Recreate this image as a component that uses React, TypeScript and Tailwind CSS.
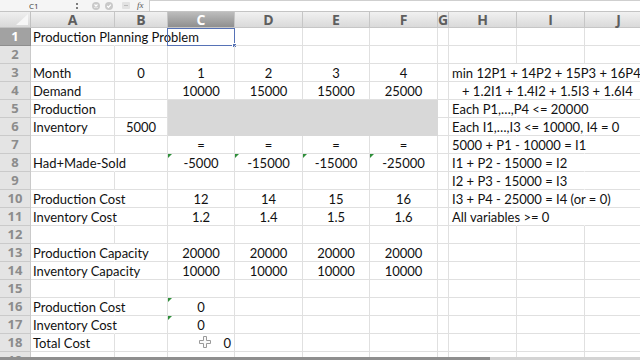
import React from "react";

type Cell = {
  t?: string;
  a?: "l" | "c" | "r";
  fill?: boolean;
  nr?: boolean;
  tri?: boolean;
  ind?: boolean;
  sel?: boolean;
  cur?: boolean;
};

const colW = [
  "w-[84px]",
  "w-[53px]",
  "w-[67px]",
  "w-[68px]",
  "w-[67px]",
  "w-[68px]",
  "w-[11px]",
  "w-[68px]",
  "w-[68px]",
  "w-[68px]",
];
const letters = ["A", "B", "C", "D", "E", "F", "G", "H", "I", "J"];

const E: Cell = {};
const c = (t: string, extra: Partial<Cell> = {}): Cell => ({ t, a: "c", ...extra });
const L = (t: string, extra: Partial<Cell> = {}): Cell => ({ t, a: "l", ...extra });
const F: Cell = { fill: true };
const H = (t: string, extra: Partial<Cell> = {}): Cell => ({ t, a: "l", nr: true, ...extra });
const NR: Cell = { nr: true };

const rows: Cell[][] = [
  [L("Production Planning Problem", { nr: true }), NR, { sel: true }, E, E, E, E, E, E, E],
  [E, E, E, E, E, E, E, E, E, E],
  [L("Month"), c("0"), c("1"), c("2"), c("3"), c("4"), E, H("min 12P1 + 14P2 + 15P3 + 16P4"), NR, E],
  [L("Demand"), E, c("10000"), c("15000"), c("15000"), c("25000"), E, H("+ 1.2I1 + 1.4I2 + 1.5I3 + 1.6I4", { ind: true }), NR, E],
  [L("Production"), E, F, F, F, F, E, H("Each P1,…,P4 <= 20000"), NR, E],
  [L("Inventory"), c("5000"), F, F, F, F, E, H("Each I1,…,I3 <= 10000, I4 = 0"), NR, E],
  [E, E, c("="), c("="), c("="), c("="), E, H("5000 + P1 - 10000 = I1"), NR, E],
  [L("Had+Made-Sold", { nr: true }), E, c("-5000", { tri: true }), c("-15000", { tri: true }), c("-15000", { tri: true }), c("-25000", { tri: true }), E, H("I1 + P2 - 15000 = I2"), NR, E],
  [E, E, E, E, E, E, E, H("I2 + P3 - 15000 = I3"), NR, E],
  [L("Production Cost", { nr: true }), E, c("12"), c("14"), c("15"), c("16"), E, H("I3 + P4 - 25000 = I4 (or = 0)"), NR, E],
  [L("Inventory Cost", { nr: true }), E, c("1.2"), c("1.4"), c("1.5"), c("1.6"), E, H("All variables >= 0"), NR, E],
  [E, E, E, E, E, E, E, E, E, E],
  [L("Production Capacity", { nr: true }), E, c("20000"), c("20000"), c("20000"), c("20000"), E, E, E, E],
  [L("Inventory Capacity", { nr: true }), E, c("10000"), c("10000"), c("10000"), c("10000"), E, E, E, E],
  [E, E, E, E, E, E, E, E, E, E],
  [L("Production Cost", { nr: true }), E, c("0", { tri: true }), E, E, E, E, E, E, E],
  [L("Inventory Cost", { nr: true }), E, c("0", { tri: true }), E, E, E, E, E, E, E],
  [L("Total Cost"), E, { t: "0", a: "r", cur: true }, E, E, E, E, E, E, E],
  [E, E, E, E, E, E, E, E, E, E],
];

function CellView({ cell, i }: { cell: Cell; i: number }) {
  const align =
    cell.a === "c" ? "justify-center" : cell.a === "r" ? "justify-end pr-[3px]" : "justify-start pl-[2px]";
  const border = cell.fill
    ? "bg-[#d8d8d8] border-r-[#d8d8d8] border-b-[#d8d8d8]"
    : cell.nr
    ? "border-r-transparent border-b-[#e0e0e0]"
    : "border-r-[#e0e0e0] border-b-[#e0e0e0]";
  return (
    <div
      className={`${colW[i]} shrink-0 h-[18px] relative flex items-center border-r border-b ${border} ${align} whitespace-nowrap overflow-visible`}
    >
      {cell.tri && (
        <span className="absolute left-0 top-0 w-0 h-0 border-t-[4px] border-r-[4px] border-t-[#2f8f3a] border-r-transparent" />
      )}
      {cell.t && (
        <span className={`text-[13px] leading-[18px] text-[#111] ${cell.ind ? "pl-[11px]" : i === 7 ? "pl-[1px]" : ""}`}>
          {cell.t}
        </span>
      )}
      {cell.sel && (
        <>
          <span className="absolute left-[-1px] top-[0px] right-[-1px] bottom-[-1px] border-[1.5px] border-[#5672b6]" />
          <span className="absolute right-[-3px] bottom-[-3px] w-[5px] h-[5px] bg-[#5672b6] border border-white" />
        </>
      )}
      {cell.cur && (
        <svg className="absolute left-[31px] top-[2px]" width="12" height="12" viewBox="0 0 12 12">
          <path
            d="M4.5 0.5h3v4h4v3h-4v4h-3v-4h-4v-3h4z"
            fill="#fafafa"
            stroke="#9a9a9a"
            strokeWidth="1"
          />
        </svg>
      )}
    </div>
  );
}

export default function App() {
  return (
    <div className="w-[640px] h-[360px] overflow-hidden bg-white flex flex-col font-['Lato',sans-serif]">
      {/* formula bar */}
      <div className="h-[12px] shrink-0 flex items-center bg-[#f5f5f5] border-b border-[#c4c4c4] relative">
        <div className="w-[70px] shrink-0 h-full flex items-center pl-[29px] text-[8px] leading-none text-[#3a3a3a] font-['Open_Sans',sans-serif]">
          C1
        </div>
        <div className="w-[14px] shrink-0 flex flex-col items-center gap-[2px]">
          <span className="w-[2px] h-[2px] bg-[#555] rounded-full" />
          <span className="w-[2px] h-[2px] bg-[#555] rounded-full" />
        </div>
        <div className="w-[8px]" />
        <span className="w-[8px] h-[8px] rounded-full bg-[#c9c9c9] flex items-center justify-center">
          <svg width="6" height="6" viewBox="0 0 6 6">
            <path d="M1.5 1.5l3 3M4.5 1.5l-3 3" stroke="#fff" strokeWidth="1.2" />
          </svg>
        </span>
        <div className="w-[5px]" />
        <span className="w-[8px] h-[8px] rounded-full bg-[#c9c9c9] flex items-center justify-center">
          <svg width="6" height="6" viewBox="0 0 6 6">
            <path d="M1.2 3l1.3 1.4L4.8 1.6" stroke="#fff" strokeWidth="1.2" fill="none" />
          </svg>
        </span>
        <div className="w-[9px]" />
        <span className="w-[8px] h-[7px] rounded-[1px] bg-[#e2e2e2] flex items-center justify-center">
          <span className="w-[4px] h-[1px] bg-[#bbb]" />
        </span>
        <div className="w-[7px]" />
        <span className="text-[9px] leading-none italic font-['Liberation_Serif',serif] text-[#555]">fx</span>
        <div className="ml-[5px] flex-1 h-full bg-white border-t border-l border-[#cfcfcf]" />
      </div>

      {/* column headers */}
      <div className="flex shrink-0 h-[16px]">
        <div className="w-[31px] shrink-0 h-full bg-gradient-to-b from-[#efefef] to-[#d9d9d9] border-r border-b border-[#c2c2c2] relative">
          <svg className="absolute right-[2px] bottom-[2px]" width="12" height="11" viewBox="0 0 12 11">
            <path d="M12 0 L12 11 L0 11 Z" fill="#f7f7f7" />
          </svg>
        </div>
        {letters.map((l, i) => (
          <div
            key={l}
            className={`${colW[i]} shrink-0 h-full flex items-center justify-center border-r border-b border-[#c6c6c6] text-[14px] leading-none font-bold font-['Open_Sans',sans-serif] ${
              l === "C"
                ? "bg-gradient-to-b from-[#bdbdbd] to-[#8f8f8f] text-white"
                : "bg-gradient-to-b from-[#f1f1f1] to-[#dadada] text-[#5e5e5e]"
            }`}
          >
            {l}
          </div>
        ))}
      </div>

      {/* rows */}
      <div className="flex-1 min-h-0 overflow-hidden">
        {rows.map((r, ri) => (
          <div key={ri} className="flex h-[18px]">
            <div
              className={`w-[31px] shrink-0 h-full flex items-center justify-center border-r border-b text-[13px] leading-none font-bold font-['Open_Sans',sans-serif] ${
                ri === 0
                  ? "bg-[#a2a2a2] text-white border-[#8e8e8e]"
                  : "bg-[#e4e4e4] text-[#8c8c8c] border-[#cacaca]"
              }`}
            >
              {ri + 1}
            </div>
            {r.map((cell, ci) => (
              <CellView key={ci} cell={cell} i={ci} />
            ))}
          </div>
        ))}
      </div>

      {/* horizontal scrollbar */}
      <div className="h-[3px] shrink-0 flex bg-[#d4d4d4]">
        <div className="w-[490px] h-full bg-[#8f8f8f]" />
      </div>
    </div>
  );
}
